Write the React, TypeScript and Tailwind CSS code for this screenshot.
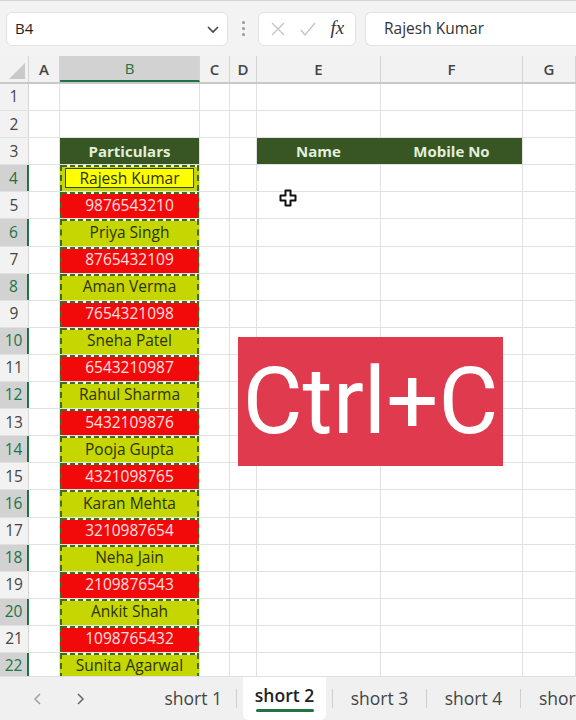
import React from 'react';

const cols = [
  { key: 'A', w: 31 },
  { key: 'B', w: 140 },
  { key: 'C', w: 30 },
  { key: 'D', w: 27 },
  { key: 'E', w: 124 },
  { key: 'F', w: 142 },
  { key: 'G', w: 53 },
];

const data: string[] = [
  'Rajesh Kumar', '9876543210', 'Priya Singh', '8765432109', 'Aman Verma', '7654321098',
  'Sneha Patel', '6543210987', 'Rahul Sharma', '5432109876', 'Pooja Gupta', '4321098765',
  'Karan Mehta', '3210987654', 'Neha Jain', '2109876543', 'Ankit Shah', '1098765432', 'Sunita Agarwal',
];

const font = { fontFamily: '"Open Sans", "Noto Sans", sans-serif' };

const BCell: React.FC<{ row: number }> = ({ row }) => {
  if (row === 3) {
    return (
      <div className="flex h-full items-center justify-center bg-[#375623] text-[15px] font-bold text-[#e2efda]">
        Particulars
      </div>
    );
  }
  const idx = row - 4;
  if (idx < 0 || idx >= data.length) return null;
  const isName = idx % 2 === 0;
  const first = idx === 0;
  return (
    <div
      className={`relative flex h-full items-center justify-center border-x-2 border-dashed border-[#3d6e1f] text-[15.5px] ${
        isName ? 'bg-[#c6d600] text-[#2b3300]' : 'bg-[#f20a0a] text-[#ffe0e0]'
      }`}
    >
      <div className="pointer-events-none absolute inset-x-0 top-0 h-[2px] bg-[repeating-linear-gradient(90deg,#3d6e1f_0px,#3d6e1f_5px,#ffffff_5px,#ffffff_8px)]" />
      {first && <div className="absolute inset-[3px] border border-[#2e4a10] bg-[#ffff00]" />}
      <span className="relative">{data[idx]}</span>
    </div>
  );
};

const Cursor = () => (
  <svg width="18" height="18" viewBox="0 0 18 18" className="absolute left-[279px] top-[133px]">
    <path
      d="M6.5 1.5h5v5h5v5h-5v5h-5v-5h-5v-5h5z"
      fill="#fff"
      stroke="#111"
      strokeWidth="2"
      strokeLinejoin="round"
    />
  </svg>
);

export default function App() {
  const rows = Array.from({ length: 22 }, (_, i) => i + 1);
  return (
    <div className="relative flex h-[720px] w-[576px] flex-col overflow-hidden bg-white" style={font}>
      {/* formula bar */}
      <div className="flex h-[56px] shrink-0 items-center border-t border-[#d6d6d6] bg-[#f3f3f3] pl-[6px]">
        <div className="flex h-[34px] w-[222px] items-center justify-between rounded-md border border-[#e2e2e2] bg-white pl-[8px] pr-[6px] text-[15px] text-[#222]">
          <span>B4</span>
          <svg width="16" height="16" viewBox="0 0 16 16">
            <path d="M3 6l5 5 5-5" fill="none" stroke="#444" strokeWidth="1.6" />
          </svg>
        </div>
        <div className="flex w-[30px] flex-col items-center gap-[3px]">
          <span className="h-[3px] w-[3px] rounded-full bg-[#999]" />
          <span className="h-[3px] w-[3px] rounded-full bg-[#999]" />
          <span className="h-[3px] w-[3px] rounded-full bg-[#999]" />
        </div>
        <div className="flex h-[34px] w-[98px] items-center justify-around rounded-md border border-[#e2e2e2] bg-white px-[4px]">
          <svg width="16" height="16" viewBox="0 0 16 16">
            <path d="M2 2l12 12M14 2L2 14" stroke="#c4c4c4" strokeWidth="1.4" />
          </svg>
          <svg width="18" height="16" viewBox="0 0 18 16">
            <path d="M2 9l4 5L16 2" fill="none" stroke="#c4c4c4" strokeWidth="1.4" />
          </svg>
          <span className="text-[19px] italic text-[#333]" style={{ fontFamily: '"Liberation Serif", serif' }}>
            fx
          </span>
        </div>
        <div className="ml-[9px] flex h-[34px] flex-1 items-center rounded-l-md border border-r-0 border-[#e2e2e2] bg-white pl-[18px] text-[15.5px] text-[#333]">
          Rajesh Kumar
        </div>
      </div>

      {/* grid */}
      <div className="relative flex-1 overflow-hidden">
        <div className="flex h-[28px] border-b-2 border-[#c8c8c8] bg-[#f2f2f2] text-[15px] font-semibold text-[#444]">
          <div className="relative w-[29px] shrink-0 border-r border-[#d4d4d4]">
            <svg width="16" height="16" viewBox="0 0 16 16" className="absolute bottom-[3px] right-[3px]">
              <path d="M16 0v16H0z" fill="#c9c9c9" />
            </svg>
          </div>
          {cols.map((c) => (
            <div
              key={c.key}
              style={{ width: c.w }}
              className={`flex shrink-0 items-center justify-center border-r border-[#d4d4d4] ${
                c.key === 'B' ? 'border-b-2 border-b-[#217346] bg-[#d2d2d2] font-normal text-[#217346]' : ''
              }`}
            >
              {c.key}
            </div>
          ))}
        </div>
        {rows.map((r) => {
          const sel = r >= 4 && r % 2 === 0;
          return (
            <div key={r} className="flex h-[27.1px] border-b border-[#e1e1e1]">
              <div
                className={`flex w-[29px] shrink-0 items-center justify-center border-r text-[15.5px] ${
                  sel ? 'border-r-2 border-r-[#217346] bg-[#d2d2d2] text-[#217346]' : 'border-[#d4d4d4] bg-[#f2f2f2] text-[#444]'
                }`}
              >
                {r}
              </div>
              {cols.map((c) => (
                <div
                  key={c.key}
                  style={{ width: c.w }}
                  className={`shrink-0 border-r ${r === 3 && c.key === 'E' ? 'border-[#375623]' : 'border-[#e1e1e1]'}`}
                >
                  {c.key === 'B' && <BCell row={r} />}
                  {r === 3 && (c.key === 'E' || c.key === 'F') && (
                    <div className="flex h-full items-center justify-center bg-[#375623] text-[15px] font-bold text-[#e2efda]">
                      {c.key === 'E' ? 'Name' : 'Mobile No'}
                    </div>
                  )}
                </div>
              ))}
            </div>
          );
        })}
        <Cursor />
        <div
          className="absolute left-[238px] top-[281px] flex h-[129px] w-[265px] items-center justify-center bg-[#e03a4e] text-[92px] leading-none text-white"
          style={{ fontFamily: 'Roboto, sans-serif' }}
        >
          Ctrl+C
        </div>
      </div>

      {/* sheet tabs */}
      <div className="flex h-[44px] shrink-0 items-stretch whitespace-nowrap border-t border-[#e0e0e0] bg-[#f0f0f0] text-[17.5px] text-[#444]">
        <div className="flex w-[130px] shrink-0 items-center gap-[30px] pl-[32px]">
          <svg width="12" height="14" viewBox="0 0 12 14">
            <path d="M8 2L3 7l5 5" fill="none" stroke="#a0a0a0" strokeWidth="1.5" />
          </svg>
          <svg width="12" height="14" viewBox="0 0 12 14">
            <path d="M4 2l5 5-5 5" fill="none" stroke="#666" strokeWidth="1.5" />
          </svg>
        </div>
        <div className="flex w-[106px] shrink-0 items-center justify-end pr-[14px]">short 1</div>
        <div className="my-[12px] w-px shrink-0 bg-[#cfcfcf]" />
        <div className="mx-[6px] flex w-[83px] shrink-0 flex-col items-center justify-center rounded-b-md bg-white font-semibold text-[#222]">
          <span className="leading-tight">short 2</span>
          <span className="mt-[2px] h-[3px] w-[58px] rounded bg-[#217346]" />
        </div>
        <div className="my-[12px] w-px shrink-0 bg-[#cfcfcf]" />
        <div className="flex w-[93px] shrink-0 items-center justify-center">short 3</div>
        <div className="my-[12px] w-px shrink-0 bg-[#cfcfcf]" />
        <div className="flex w-[93px] shrink-0 items-center justify-center">short 4</div>
        <div className="my-[12px] w-px shrink-0 bg-[#cfcfcf]" />
        <div className="flex shrink-0 items-center pl-[18px]">short 5</div>
      </div>
    </div>
  );
}
